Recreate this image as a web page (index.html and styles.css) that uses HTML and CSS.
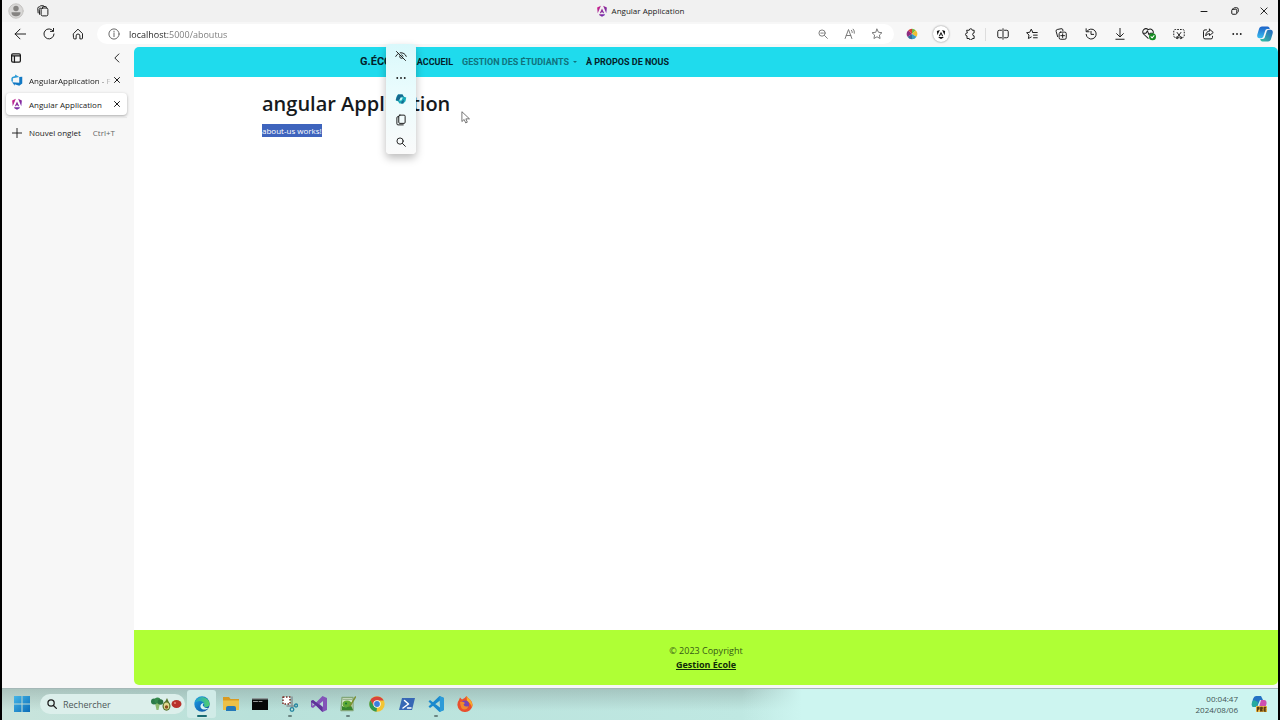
FILE: index.html
```html
<!DOCTYPE html>
<html lang="fr">
<head>
<meta charset="utf-8">
<title>Angular Application</title>
<link rel="stylesheet" href="styles.css">
</head>
<body>
<svg class="defs" aria-hidden="true">
  <defs>
    <linearGradient id="g-ang" x1="0" y1="0" x2="1" y2="1"><stop offset="0" stop-color="#e0218a"/><stop offset=".5" stop-color="#8a2a9a"/><stop offset="1" stop-color="#6a2fc0"/></linearGradient>
    <linearGradient id="g-cop" x1="0" y1="0" x2="0" y2="1"><stop offset="0" stop-color="#1d62c8"/><stop offset="1" stop-color="#38bdf0"/></linearGradient>
    <linearGradient id="g-cop2" x1="0" y1="1" x2="1" y2="0"><stop offset="0" stop-color="#35c4a0"/><stop offset="1" stop-color="#2466c4"/></linearGradient>
    <linearGradient id="g-edge" x1="0" y1="0" x2="1" y2="1"><stop offset="0" stop-color="#1ca0e8"/><stop offset="1" stop-color="#0c4f9e"/></linearGradient>
    <linearGradient id="g-edge2" x1="0" y1="0" x2="1" y2="0"><stop offset="0" stop-color="#1f9fd8"/><stop offset="1" stop-color="#52cf6a"/></linearGradient>
    <linearGradient id="g-win" x1="0" y1="0" x2="1" y2="1"><stop offset="0" stop-color="#45b6e8"/><stop offset="1" stop-color="#0a6cb8"/></linearGradient>
    <symbol id="angular" viewBox="0 0 16 16"><path fill="url(#g-ang)" d="M6.500 1 1.500 3.300l.8 7.700L6.500 1Zm3 0 5 2.300-.8 7.700L9.500 1ZM8 4.500l3 6.500H9.800L9.300 10H6.700l-.5 1H5L8 4.500ZM4 12.200h8l-.5 1.500L8 15.700l-3.500-2L4 12.200Z"/></symbol>
    <symbol id="close" viewBox="0 0 16 16"><path d="m3 3 10 10M13 3 3 13"/></symbol>
    <symbol id="copilot" viewBox="0 0 16 16"><path fill="url(#g-cop)" stroke="none" d="M5 .5h5.500c1.500 0 2 1 2.300 2.500H10.500c-1.500 0-2 .7-2.400 2L6.500 10c-.4 1.300-1 2.200-2.500 2.200H2.500C.2 12.200-.2 10 .5 8l1.400-4.800C2.500 1.500 3.300.5 5 .5Z"/><path fill="url(#g-cop2)" stroke="none" d="M11 15.500H5.500c-1.500 0-2-1-2.300-2.500h2.300c1.500 0 2-.7 2.400-2L9.500 6c.4-1.300 1-2.200 2.500-2.200h1.500c2.300 0 2.700 2.200 2 4.200l-1.400 4.800c-.6 1.700-1.400 2.700-3.100 2.700Z"/></symbol>
    <symbol id="search" viewBox="0 0 16 16"><circle cx="6.500" cy="6.500" r="5"/><path d="m10.300 10.300 4.700 4.700"/></symbol>
    <symbol id="star" viewBox="0 0 16 16"><path d="m8 1.500 2 4.200 4.600.6-3.400 3.100.9 4.600L8 11.700 3.900 14l.9-4.600L1.400 6.300 6 5.700Z"/></symbol>
    <symbol id="dots" viewBox="0 0 16 16"><g fill="currentColor" stroke="none"><circle cx="2" cy="8" r="1.500"/><circle cx="8" cy="8" r="1.500"/><circle cx="14" cy="8" r="1.500"/></g></symbol>
  </defs>
</svg>
<div class="desktop">
  <header class="titlebar">
    <div class="title-left">
      <button class="tool" aria-label="Profil"><svg class="i16" viewBox="0 0 16 16"><circle cx="8" cy="8" r="7.200" fill="#d8d7d6" stroke="#c5c3c1" stroke-width="1"/><circle cx="8" cy="5.500" r="2.700" fill="#858381" stroke="none"/><path fill="#858381" stroke="none" d="M3.500 9.200h9c0 3-2 4-4.500 4s-4.500-1-4.500-4Z"/></svg></button>
      <button class="tool" aria-label="Espaces de travail"><svg class="i12" viewBox="0 0 16 16"><rect x="5.500" y="4" width="9" height="10.500" rx="2"/><path d="M7.500 4V3a1 1 0 0 1 1-1h3a1 1 0 0 1 1 1v1M3.500 12.500 3 6a2 2 0 0 1 2-2M1.500 10.500 1 4.500a2 2 0 0 1 2-2l2-1.500h3.500"/></svg></button>
    </div>
    <div class="window-title"><svg class="i12 plain"><use href="#angular"/></svg><span>Angular Application</span></div>
    <div class="window-buttons">
      <button aria-label="Réduire"><svg class="i8" viewBox="0 0 16 16"><path d="M2 9h12"/></svg></button>
      <button aria-label="Restaurer"><svg class="i8" viewBox="0 0 16 16"><rect x="1.500" y="4.500" width="10" height="10" rx="2"/><path d="M5 2.500Q5.500 1.500 7 1.500h4.500a3 3 0 0 1 3 3V9q0 1.500-1 2"/></svg></button>
      <button aria-label="Fermer"><svg class="i10"><use href="#close"/></svg></button>
    </div>
  </header>

  <div class="toolbar">
    <nav class="tool-group">
      <button class="tool" aria-label="Retour"><svg class="i12" viewBox="0 0 16 16"><path d="M15.500 8H1.500M8 1.500 1.500 8 8 14.500"/></svg></button>
      <button class="tool" aria-label="Actualiser"><svg class="i12" viewBox="0 0 16 16"><path d="M13.500 4A6.700 6.700 0 1 0 14.700 8M14 .5V4.500H10"/></svg></button>
      <button class="tool" aria-label="Accueil"><svg class="i12" viewBox="0 0 16 16"><path d="M2 7.500 8 1.500l6 6v6a1 1 0 0 1-1 1h-2.500v-4a2.500 2.500 0 0 0-5 0v4H3a1 1 0 0 1-1-1Z"/></svg></button>
    </nav>
    <div class="address">
      <svg class="i12 soft" viewBox="0 0 16 16"><circle cx="8" cy="8" r="6.800"/><path d="M8 7v4.500M8 4.200v1.200"/></svg>
      <input class="url" type="text" aria-label="Adresse" value="localhost:5000/aboutus">
      <button class="addr-btn" aria-label="Zoom"><svg class="i10" viewBox="0 0 16 16"><circle cx="6.500" cy="6.500" r="5"/><path d="m10.300 10.300 4.700 4.700M4.500 6.500h4"/></svg></button>
      <button class="addr-btn" aria-label="Lecture à voix haute"><svg class="i12" viewBox="0 0 16 16"><path d="m1.500 14 4.500-12 4.500 12M3 10h6M10 3q1 1 1 3M12.300 1.500q2 2 1.500 5.500"/></svg></button>
      <button class="addr-btn" aria-label="Favori"><svg class="i12"><use href="#star"/></svg></button>
    </div>
    <div class="tool-group extensions">
      <button class="tool" aria-label="Palette"><svg class="i12 plain" viewBox="0 0 16 16"><path fill="#75b843" d="M8 8V1a7 7 0 0 1 5 2Z"/><path fill="#f0c030" d="M8 8 13 3a7 7 0 0 1 1 8.500Z"/><path fill="#3a9ac0" d="m8 8 6 3.500A7 7 0 0 1 8 15Z"/><path fill="#356a9a" d="M8 8v7a7 7 0 0 1-6-3.500Z"/><path fill="#8e2b80" d="m8 8-6 3.500A7 7 0 0 1 3 3Z"/><path fill="#d53c35" d="M8 8 3 3a7 7 0 0 1 5-2Z"/></svg></button>
      <button class="tool" aria-label="Angular DevTools"><span class="ext-disc"><svg class="i12 plain" viewBox="0 0 16 16"><path fill="#111" d="M6.500 2.500 2.500 4l.7 5.500ZM9.500 2.500l4 1.500-.7 5.500ZM8 5l3 6H9.500L8 8 6.500 11H5ZM4.500 12h7l-.5 1L8 14.500 5 13Z"/></svg></span></button>
      <button class="tool" aria-label="Extensions"><svg class="i12" viewBox="0 0 16 16"><path d="M4 3h3a2 2 0 0 1 4 0h2.500v3.500a2 2 0 0 0 0 4V14H11a2 2 0 0 1-4 0H4v-3.500a2 2 0 0 1 0-4Z"/></svg></button>
    </div>
    <span class="separator"></span>
    <div class="tool-group spread">
      <button class="tool" aria-label="Écran partagé"><svg class="i12" viewBox="0 0 16 16"><path d="M6 3H3a2 2 0 0 0-2 2v6a2 2 0 0 0 2 2h3M10 3h3a2 2 0 0 1 2 2v6a2 2 0 0 1-2 2h-3M8 1v14"/></svg></button>
      <button class="tool" aria-label="Favoris"><svg class="i12" viewBox="0 0 16 16"><path d="M9 5.700 7 1.500 5 5.700.8 6.300 4 9.400 3.200 14l3.800-2M9 6h6M10 9.500h5M10 13h5"/></svg></button>
      <button class="tool" aria-label="Collections"><svg class="i12" viewBox="0 0 16 16"><rect x="5.500" y="5.500" width="9.500" height="9.500" rx="2"/><path d="M10.200 7.700v5M7.700 10.200h5M3.500 11.500 1.500 4.500A2 2 0 0 1 3 2l5-1a2 2 0 0 1 2.500 1.500V3.500"/></svg></button>
      <button class="tool" aria-label="Historique"><svg class="i12" viewBox="0 0 16 16"><path d="M2.500 4.500a6.700 6.700 0 1 1-1 4M1.500 1v4h4M8 4.500v4h3.500"/></svg></button>
      <button class="tool" aria-label="Téléchargements"><svg class="i12" viewBox="0 0 16 16"><path d="M8 .5v11M3.500 7.500 8 12l4.500-4.500M2.500 15h11"/></svg></button>
      <button class="tool" aria-label="Performances"><svg class="i14" viewBox="0 0 18 18"><path d="M8 14.500 2 9a4 4 0 0 1 6-5.500 4 4 0 0 1 6 5M2 8h3l2-3 2 5 1.500-2H13"/><circle cx="13.500" cy="12.500" r="4.500" fill="#148a20" stroke="none"/><path stroke="#fff" d="m11.500 12.500 1.500 1.500 2.500-3"/></svg></button>
      <button class="tool" aria-label="Capture"><svg class="i12" viewBox="0 0 16 16"><path stroke-linecap="butt" stroke-dasharray="2.200 1.500" d="M3 12.500A2 2 0 0 1 1 10.500V4a2 2 0 0 1 2-2h10a2 2 0 0 1 2 2v6.500a2 2 0 0 1-2 2"/><path d="m5.500 6 4 5.500M10.500 6l-4 5.500"/><circle cx="5.500" cy="13" r="1.300"/><circle cx="10.500" cy="13" r="1.300"/></svg></button>
      <button class="tool" aria-label="Partager"><svg class="i12" viewBox="0 0 16 16"><path d="M6 2.500H4a2 2 0 0 0-2 2v8a2 2 0 0 0 2 2h8a2 2 0 0 0 2-2V11M10 1.500 15 6l-5 4V7.500Q6.500 7.500 5 10.500 5 4.500 10 4Z"/></svg></button>
      <button class="tool" aria-label="Plus"><svg class="i10"><use href="#dots"/></svg></button>
    </div>
    <button class="tool copilot" aria-label="Copilot"><svg class="i16 plain"><use href="#copilot"/></svg></button>
  </div>

  <div class="workspace">
    <aside class="sidebar">
      <div class="side-head">
        <button class="side-btn" aria-label="Onglets verticaux"><svg class="i10 bold" viewBox="0 0 16 16"><rect x="1" y="1.500" width="14" height="13" rx="2"/><path d="M1 4.500h14M5.500 4.500v10"/></svg></button>
        <button class="side-btn" aria-label="Réduire le volet"><svg class="i10" viewBox="0 0 16 16"><path d="M11 1.500 4.500 8l6.500 6.500"/></svg></button>
      </div>
      <div class="tab">
        <svg class="i12 plain" viewBox="0 0 16 16"><path fill="#1279c4" d="M15 3.500v9l-4 3-6-2v2l-3.500-4.500 9.500.8V4Z"/><path fill="#2a9ad6" d="M11 4 5.500.8v2L1.500 4 .5 5.500v4l2 1V5.700Z"/></svg>
        <span class="tab-name fade">AngularApplication - F</span>
        <button class="tab-close" aria-label="Fermer l’onglet"><svg class="i8"><use href="#close"/></svg></button>
      </div>
      <div class="tab active">
        <svg class="i12 plain"><use href="#angular"/></svg>
        <span class="tab-name">Angular Application</span>
        <button class="tab-close" aria-label="Fermer l’onglet"><svg class="i8"><use href="#close"/></svg></button>
      </div>
      <button class="new-tab"><svg class="i10" viewBox="0 0 16 16"><path d="M8 .5v15M.5 8h15"/></svg><span>Nouvel onglet</span><kbd>Ctrl+T</kbd></button>
    </aside>

    <div class="page">
      <nav class="navbar">
        <a class="brand" href="#">G.ÉCOLE</a>
        <a href="#">ACCUEIL</a>
        <a class="dropdown" href="#">GESTION DES ÉTUDIANTS</a>
        <a href="#">À PROPOS DE NOUS</a>
      </nav>
      <main class="content">
        <h1>angular Application</h1>
        <p><mark>about-us works!</mark></p>
      </main>
      <footer class="footer">
        <span>© 2023 Copyright</span>
        <a href="#">Gestion École</a>
      </footer>
      <div class="mini-menu">
        <button aria-label="Masquer le menu"><svg class="i12" viewBox="0 0 16 16"><path d="M2 2l12 12M1 8.500Q2.500 5.500 5 4.500M7 3.700q6-.5 8 4.800M6.500 7.500a2.500 2.500 0 0 0 3.500 3.300M9 6.500a2.500 2.500 0 0 1 1.700 1.700"/></svg></button>
        <button aria-label="Plus d’actions"><svg class="i10"><use href="#dots"/></svg></button>
        <button aria-label="Demander à Copilot"><svg class="i12 plain" viewBox="0 0 16 16"><path fill="#18a9b8" d="M4 2h6l2 3 3 1-1 5-3 3H6l-2-3-3-1 1-5Z"/><path fill="#17688e" d="M4 2h6l1.500 3H8L6 10H2l-1-1Zm7 12 1-5-3 2-1 3Z"/><path fill="#c9fbf8" d="M7.500 6h3l-2 4h-3Z"/></svg></button>
        <button aria-label="Copier"><svg class="i12" viewBox="0 0 16 16"><rect x="5" y="1.500" width="8.500" height="11" rx="1.500"/><path d="M5 3.500H4A1.500 1.500 0 0 0 2.500 5v8A1.500 1.500 0 0 0 4 14.500h7"/></svg></button>
        <button aria-label="Rechercher"><svg class="i10"><use href="#search"/></svg></button>
      </div>
      <svg class="cursor" viewBox="0 0 10 14"><path fill="#fff" stroke="#444" stroke-width=".8" d="M1 1v10.500l2.500-2.300 1.700 3.800 1.800-.8L5.400 8.500H9Z"/></svg>
    </div>
  </div>

  <footer class="taskbar">
    <button class="start" aria-label="Démarrer"><svg class="i16 plain" viewBox="0 0 16 16"><path fill="url(#g-win)" d="M0 0h7.500v7.500H0ZM8.500 0H16v7.500H8.500ZM0 8.500h7.500V16H0ZM8.500 8.500H16V16H8.500Z"/></svg></button>
    <label class="search">
      <svg class="i10 bold"><use href="#search"/></svg>
      <input type="text" placeholder="Rechercher" aria-label="Rechercher">
      <svg class="veggies" viewBox="0 0 32 14"><path fill="#8fbb70" d="m5 6 1.500 7h2L10 6Z"/><circle cx="4" cy="4.500" r="3" fill="#2c7a48"/><circle cx="7.500" cy="3.500" r="3" fill="#358a4c"/><circle cx="10.500" cy="5" r="2.800" fill="#2a7040"/><ellipse cx="16.500" cy="9" rx="4" ry="4.700" fill="#55702a"/><path fill="#55702a" d="M14 7 17 1l3 7Z"/><ellipse cx="16.500" cy="9" rx="2.800" ry="3.600" fill="#e0d890"/><circle cx="16.500" cy="10" r="1.700" fill="#8a5020"/><ellipse cx="26.500" cy="7" rx="5" ry="4" fill="#b8312c"/><circle cx="25" cy="6" r="1" fill="#e88878"/></svg>
    </label>
    <div class="apps">
      <button class="app current" aria-label="Edge"><svg class="i16 plain" viewBox="0 0 16 16"><circle cx="8" cy="8" r="7.700" fill="url(#g-edge)"/><path fill="url(#g-edge2)" d="M.5 7A7.700 7.700 0 0 1 15.700 8c0 3-4.200 4-6 2.500C11 9 10 5 6 5 3.500 5 1.500 6 .5 7Z"/><path fill="#d9f4f2" d="M9.700 10.500C8 9.500 9 8 9.800 7.300 7.500 6.500 5.500 9.500 7 12c1.500 2 5 2 7.300 0-2 .3-3.600-.3-4.600-1.500Z"/></svg></button>
      <button class="app" aria-label="Explorateur"><svg class="i16 plain" viewBox="0 0 16 16"><path fill="#d99a20" d="M0 1h6l1.500 2H16v4H0Z"/><path fill="#ecc046" d="M0 4.500h16V14H0Z"/><path fill="#2479b8" d="M3 15v-3a2 2 0 0 1 2-2h6a2 2 0 0 1 2 2v3Z"/></svg></button>
      <button class="app" aria-label="Invite de commandes"><svg class="i16 plain" viewBox="0 0 16 16"><path fill="#070707" d="M0 2h16v12H0Z"/><path fill="#8b9696" d="M0 2h16v1.500H0Z"/><path stroke="#bbb" stroke-width=".8" d="M1.500 5.500h4M7 5.500h3"/></svg></button>
      <button class="app running" aria-label="Capture d’écran"><svg class="i16 plain" viewBox="0 0 16 16"><path fill="#fff" stroke="#7a2b25" stroke-width="1.500" stroke-linecap="butt" stroke-dasharray="1.500 1.500" d="M1 1h7v7H1Z"/><path fill="none" stroke="#879396" stroke-width="1.500" d="M10 1v10M5 10h8"/><circle cx="10" cy="13.500" r="1.800" fill="none" stroke="#2786a0" stroke-width="1.300"/><circle cx="14" cy="9.500" r="1.500" fill="none" stroke="#2786a0" stroke-width="1.300"/></svg></button>
      <button class="app" aria-label="Visual Studio"><svg class="i16 plain" viewBox="0 0 16 16"><path fill="#8354b8" d="m11.500 0 4.500 2v12l-4.500 2L5 9.500 2 12l-2-1V5l2-1 3 2.500Z"/><path fill="#b8dcd6" d="M12 5v6L8.500 8ZM1.500 6v4l2-2Z"/><path fill="#5d3498" d="M0 5l2-1 9.500 7v5L5 9.500 0 6Z"/></svg></button>
      <button class="app running" aria-label="Notepad++"><svg class="i16 plain" viewBox="0 0 16 16"><path fill="#e9f3df" stroke="#82a677" d="M2 1.500h11v13H1Z"/><path stroke="#9ab493" d="M3 3.500h9"/><ellipse cx="7" cy="8" rx="4.500" ry="3.500" fill="#62a936"/><path fill="#37862b" d="M2 10q5 3 9-1l2 5H2Z"/><circle cx="6" cy="7.500" r="1" fill="#173"/><path stroke="#7b8f32" stroke-width="1.500" d="m10 10 5.500-9"/></svg></button>
      <button class="app" aria-label="Chrome"><svg class="i16 plain" viewBox="0 0 16 16"><circle cx="8" cy="8" r="7.700" fill="#f2c534"/><path fill="#d8433a" d="M1.300 4.200A7.700 7.700 0 0 1 14.700 4.500H8L4.700 10Z"/><path fill="#2f9a50" d="M1.300 4.200 4.800 10 8 11.500 7.500 15.700A7.700 7.700 0 0 1 1.300 4.200Z"/><circle cx="8" cy="8" r="3.700" fill="#fff"/><circle cx="8" cy="8" r="2.900" fill="#3d7fdd"/></svg></button>
      <button class="app" aria-label="PowerShell"><svg class="i16 plain" viewBox="0 0 16 16"><path fill="#3767b5" d="M3 2h13l-3 12H0Z"/><path fill="none" stroke="#fff" stroke-width="1.500" d="m5.500 4.500 4 3.500-5.500 4M8.500 12h3.500"/></svg></button>
      <button class="app running" aria-label="VS Code"><svg class="i16 plain" viewBox="0 0 16 16"><path fill="#1989ce" d="M11.500 0 16 2v12l-4.500 2L.5 5.500 2 4l10 7.500V4.500L2 12 .5 10.500Z"/><path fill="#2c9bd8" d="m11.500 0 4.500 2v12l-4.500 2 .5-3Z"/></svg></button>
      <button class="app" aria-label="Firefox"><svg class="i16 plain" viewBox="0 0 16 16"><path fill="#e8502e" d="M2 4 3 1.500 5 3.500Q8 2 9.500 0 11 2 13 3.500q3 3 2.500 6A7.600 7.600 0 0 1 .4 9Q.3 6 2 4Z"/><path fill="#f8aa2b" d="M9.500 0Q11 2 13 3.500q3.500 4 2 8-1.500-5-5-6Z"/><circle cx="8" cy="8.500" r="4" fill="#7546b5"/><path fill="#f08a2c" d="M3 6q3-1 5 1L6.500 8.500q1 3 5 1.500-1 3.500-4.500 3.500T3 6Z"/></svg></button>
    </div>
    <div class="clock"><time>00:04:47</time><time>2024/08/06</time></div>
    <button class="pre" aria-label="Copilot"><svg class="i16 plain" viewBox="0 0 16 16"><path fill="#2372c4" d="M5 0h5l2 4H9L6 11H3Q0 11 1 7l1-4q1-3 3-3Z"/><path fill="#25aaa0" d="M1 6l2-2 4 2-1 5H3Q0 11 1 6Z"/><path fill="#ce50b0" d="M10 4h3q3 0 2.500 4L14 12l-6 2-2-2 2-1Z"/><path fill="#edbc4a" d="M5 10h11v6H5Z"/><path stroke="#5b3b10" fill="none" d="M6.500 15v-3.500H8V13H6.500M9.700 15v-3.500h1.500V13H9.700l1.500 2M14.700 11.500h-1.500V15h1.500M13.200 13.200h1.500"/></svg></button>
  </footer>
</div>
</body>
</html>
```
FILE: styles.css
```css
* { box-sizing: border-box; }
body {
  margin: 0;
  background: #000;
  font-family: "Open Sans", "Noto Sans", sans-serif;
  font-size: 8px;
  color: #1b1b1b;
}
button {
  display: flex;
  align-items: center;
  justify-content: center;
  padding: 0;
  border: 0;
  background: none;
  color: inherit;
  font: inherit;
}
input { min-width: 0; border: 0; padding: 0; background: none; font: inherit; outline: 0; }
svg { flex: none; fill: none; stroke: currentColor; stroke-width: 1.3; stroke-linejoin: round; stroke-linecap: round; }
.defs { position: absolute; width: 0; height: 0; }
.plain { stroke: none; }
.i8 { width: 8px; height: 8px; stroke-width: 2; }
.i10 { width: 10px; height: 10px; stroke-width: 1.5; }
.i12 { width: 12px; height: 12px; }
.i14 { width: 14px; height: 14px; }
.i16 { width: 16px; height: 16px; }
.bold { stroke-width: 2; }

.desktop {
  display: grid;
  grid-template-rows: 22px 24px minmax(0, 1fr) 32px;
  height: 100vh;
  padding: 0 2px;
}

.titlebar {
  display: grid;
  grid-template-columns: 1fr auto 1fr;
  align-items: center;
  padding-bottom: 1px;
  background: #f1f1f1;
}
.title-left { display: flex; }
.title-left .tool { width: 27px; height: 20px; }
.window-title { display: flex; align-items: center; gap: 4px; height: 20px; }
.window-buttons { display: flex; justify-content: flex-end; }
.window-buttons button { width: 31px; height: 20px; }
.window-buttons button:last-child { width: 28px; }

.toolbar { display: flex; align-items: center; background: #f7f7f7; }
.tool-group { display: flex; padding-left: 3px; }
.tool { width: 29px; height: 24px; }
.extensions { padding-left: 3px; }
.spread { width: 264px; padding: 0; }
.spread .tool { flex: 1; }
.copilot { width: 26px; }
.separator { width: 1px; height: 13px; margin: 0 2px 0 1px; background: #ddd; }
.address {
  display: flex;
  flex: 1;
  align-items: center;
  height: 20px;
  margin-left: 5px;
  padding: 0 4px 0 11px;
  border-radius: 10px;
  background: #fff;
}
.soft { color: #666; }
.url {
  flex: 1;
  margin-left: 9px;
  font-size: 9px;
  background: linear-gradient(90deg, #222 39px, #777 39px);
  -webkit-background-clip: text;
  background-clip: text;
  -webkit-text-fill-color: transparent;
}
.addr-btn { width: 27px; height: 20px; color: #777; }
.ext-disc {
  display: flex;
  align-items: center;
  justify-content: center;
  width: 16px;
  height: 16px;
  border-radius: 50%;
  background: #fff;
  box-shadow: 0 0 2px #777;
}

.workspace { display: grid; grid-template-columns: 132px minmax(0, 1fr); background: #f7f7f7; }
.sidebar { padding: 1px 7px 0 4px; }
.side-head { display: flex; justify-content: space-between; height: 22px; }
.side-btn { width: 20px; height: 22px; }
.tab {
  display: flex;
  align-items: center;
  height: 22px;
  margin-bottom: 2px;
  padding: 0 3px 0 5px;
  border-radius: 4px;
}
.tab.active { background: #fff; box-shadow: 0 1px 3px #aaa; }
.tab-name { flex: 1; margin-left: 6px; white-space: nowrap; }
.tab-close { width: 14px; height: 22px; }
.fade { -webkit-mask-image: linear-gradient(90deg, #000 68px, transparent 84px); mask-image: linear-gradient(90deg, #000 68px, transparent 84px); }
.new-tab {
  width: 100%;
  height: 30px;
  justify-content: flex-start;
  border-top: 1px solid #e8e8e8;
  padding-left: 6px;
}
.new-tab span { margin-left: 7px; }
.new-tab kbd { margin: 0 12px 0 auto; font: inherit; color: #666; }

.page {
  position: relative;
  display: flex;
  flex-direction: column;
  margin: 1px 0 3px;
  border-radius: 5px;
  background: #fff;
  font-size: 9px;
  line-height: 14px;
}
.navbar {
  display: flex;
  align-items: center;
  gap: 9px;
  height: 30px;
  padding-left: 226px;
  border-radius: 5px 5px 0 0;
  background: #1fdbed;
  font-family: Roboto, "Open Sans", sans-serif;
  font-weight: 700;
}
.navbar a { color: #04222a; text-decoration: none; }
.navbar .brand { margin-right: 4px; font-size: 11px; }
.navbar .dropdown { display: flex; align-items: center; gap: 4px; color: #11727c; }
.dropdown::after { content: ""; border: 2px solid transparent; border-top-color: currentColor; border-bottom: 0; }
.content { flex: 1; padding: 14px 128px; }
h1 { margin: 0 0 7px; font-size: 20px; font-weight: 600; line-height: 26px; color: #16191c; }
p { margin: 0; font-size: 8px; line-height: 13px; }
mark { display: inline-block; background: #3e64bd; color: #fff; }
.footer {
  display: flex;
  flex-direction: column;
  align-items: center;
  padding: 14px 0 13px;
  border-radius: 0 0 5px 5px;
  background: #afff35;
  color: #365a14;
}
.footer a { font-weight: 700; color: #102c08; }

.mini-menu {
  position: absolute;
  left: 252px;
  top: -3px;
  display: flex;
  flex-direction: column;
  align-items: center;
  width: 30px;
  padding: 1px 0 2px;
  border-radius: 4px;
  background: linear-gradient(#d9f8fb, #e9fcfd 40%, #fafafa);
  box-shadow: 0 4px 9px #0004;
}
.mini-menu button { width: 28px; height: 21px; }
.mini-menu button:nth-child(3n + 1) { height: 22px; }
.cursor { position: absolute; left: 327px; top: 64px; width: 9px; height: 13px; }

.taskbar {
  display: flex;
  align-items: center;
  padding-bottom: 1px;
  border-top: 1px solid #a5b8b7;
  background:
    linear-gradient(90deg, transparent 740px, #cdf5f0 800px),
    linear-gradient(#7c8f8c60, transparent 70%),
    linear-gradient(90deg, #c9e4dc, #b9e1da 250px, #bfe8e2 740px, #d0f3f1);
}
.start { width: 38px; height: 30px; padding-left: 2px; }
.search {
  display: flex;
  align-items: center;
  width: 145px;
  height: 20px;
  padding: 0 3px 0 7px;
  border-radius: 10px;
  background: #dcefeb;
}
.search input { flex: 1; margin-left: 6px; font-size: 9px; }
.search input::placeholder { color: #4e5958; opacity: 1; }
.veggies { width: 32px; height: 14px; stroke: none; }
.apps { display: flex; width: 293px; margin-left: 2px; }
.app { position: relative; flex: 1; height: 28px; border-radius: 3px; }
.current { background: #d0ebe7; }
.running::after, .current::after {
  content: "";
  position: absolute;
  bottom: 1px;
  width: 4px;
  height: 2px;
  border-radius: 1px;
  background: #6a8582;
}
.current::after { width: 10px; background: #176a72; }
.clock { display: flex; flex-direction: column; margin-left: auto; padding-bottom: 1px; text-align: right; line-height: 11px; color: #3f5454; }
.pre { width: 40px; height: 30px; padding-left: 2px; }
```
